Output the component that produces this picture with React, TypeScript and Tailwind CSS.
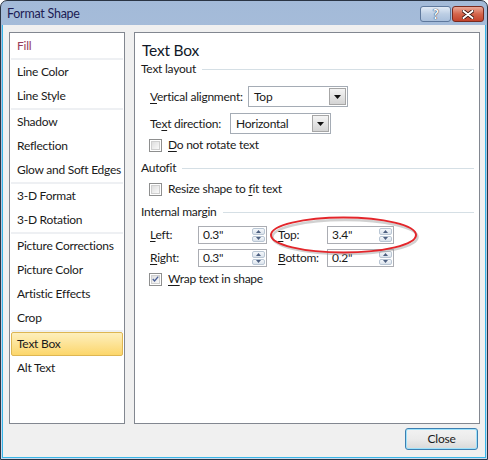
import type { ReactNode } from "react";

const NAV_GROUPS: string[][] = [
  ["Fill"],
  ["Line Color", "Line Style"],
  ["Shadow", "Reflection", "Glow and Soft Edges"],
  ["3-D Format", "3-D Rotation"],
  ["Picture Corrections", "Picture Color", "Artistic Effects", "Crop"],
  ["Text Box", "Alt Text"],
];

const SELECTED = "Text Box";

function Key({ children }: { children: ReactNode }) {
  return <span className="underline decoration-1 underline-offset-[2px]">{children}</span>;
}

function GroupHeader({ title }: { title: string }) {
  return (
    <div className="flex h-[16px] items-center gap-[6px] pr-[5px]">
      <span className="leading-[16px]">{title}</span>
      <span className="h-px flex-1 bg-[#d5dfe5]" />
    </div>
  );
}

function Dropdown({ value, width }: { value: string; width: string }) {
  return (
    <div className={`flex h-[21px] ${width} items-stretch border border-[#a5acb5] bg-white`}>
      <span className="flex-1 pl-[5px] leading-[19px]">{value}</span>
      <span className="m-px flex w-[17px] items-center justify-center border border-[#a6a6a6] bg-gradient-to-b from-[#f4f4f4] to-[#d4d4d4]">
        <svg width="7" height="4" viewBox="0 0 7 4">
          <path d="M0 0h7L3.5 4z" fill="#111" />
        </svg>
      </span>
    </div>
  );
}

function SpinButton({ up }: { up?: boolean }) {
  return (
    <span className="flex flex-1 items-center justify-center rounded-[2px] border border-[#b9c6d4] bg-gradient-to-b from-[#f5f8fb] to-[#dbe3ec]">
      <svg width="5" height="3" viewBox="0 0 5 3">
        <path d={up ? "M0 3h5L2.5 0z" : "M0 0h5L2.5 3z"} fill="#4c5f80" />
      </svg>
    </span>
  );
}

function Spinner({ value, width }: { value: string; width: string }) {
  return (
    <div className={`flex h-[18px] ${width} border border-[#abadb3] bg-white`}>
      <span className="flex-1 pl-[4px] leading-[16px]">{value}</span>
      <span className="flex w-[15px] flex-col gap-px p-px">
        <SpinButton up />
        <SpinButton />
      </span>
    </div>
  );
}

function Checkbox({ checked = false }: { checked?: boolean }) {
  return (
    <span className="flex h-[13px] w-[13px] shrink-0 border border-[#8e8f8f] bg-white p-px">
      <span className="flex h-full w-full items-center justify-center border border-[#cfcfcf] bg-gradient-to-br from-[#dedede] to-[#fafafa]">
        {checked && (
          <svg width="9" height="8" viewBox="0 0 9 8">
            <path d="M1 4l2.3 2.5L8 1" fill="none" stroke="#4a5f97" strokeWidth="1.7" />
          </svg>
        )}
      </span>
    </span>
  );
}

function CheckRow({ checked, children, className }: { checked?: boolean; children: ReactNode; className: string }) {
  return (
    <div className={`flex h-[16px] items-center gap-[6px] pl-[8px] ${className}`}>
      <Checkbox checked={checked} />
      <span className="leading-[16px]">{children}</span>
    </div>
  );
}

function NavList() {
  return (
    <div className="flex h-[392px] w-[116px] flex-col border border-[#828790] bg-white pt-px">
      {NAV_GROUPS.map((group, gi) => (
        <div key={gi} className="flex flex-col">
          {gi > 0 && <div className="mx-px h-[2px] bg-[#eef0f3]" />}
          {group.map((item) =>
            item === SELECTED ? (
              <div
                key={item}
                className="mx-px flex h-[24px] items-center whitespace-nowrap rounded-[2px] border border-[#deb652] bg-gradient-to-b from-[#fdefbd] via-[#fde395] to-[#fcd66a] pl-[5px]"
              >
                {item}
              </div>
            ) : (
              <div
                key={item}
                className={`flex h-[24px] items-center whitespace-nowrap pl-[7px] ${item === "Fill" ? "text-[#963c5a]" : "text-[#1a1a1a]"}`}
              >
                {item}
              </div>
            ),
          )}
        </div>
      ))}
    </div>
  );
}

function TextBoxPane() {
  return (
    <div className="relative flex h-[392px] w-[346px] flex-col border border-[#828790] bg-white pl-[6px]">
      <div className="ml-px mt-[7px] h-[21px] text-[15.5px] leading-[21px] tracking-[-0.2px] text-[#101828]">Text Box</div>
      <GroupHeader title="Text layout" />

      <div className="mt-[9px] flex h-[21px] items-center pl-[9px]">
        <span className="w-[98px] whitespace-nowrap">
          <Key>V</Key>ertical alignment:
        </span>
        <Dropdown value="Top" width="w-[100px]" />
      </div>
      <div className="mt-[6px] flex h-[21px] items-center pl-[9px]">
        <span className="w-[80px] whitespace-nowrap">
          Te<Key>x</Key>t direction:
        </span>
        <Dropdown value="Horizontal" width="w-[101px]" />
      </div>
      <CheckRow className="mt-[3px]">
        <Key>D</Key>o not rotate text
      </CheckRow>

      <div className="mt-[7px]">
        <GroupHeader title="Autofit" />
      </div>
      <CheckRow className="mt-[5px]">
        Resize shape to <Key>f</Key>it text
      </CheckRow>

      <div className="mt-[7px]">
        <GroupHeader title="Internal margin" />
      </div>
      <div className="mt-[6px] flex h-[18px] items-center pl-[9px]">
        <span className="w-[48px]">
          <Key>L</Key>eft:
        </span>
        <Spinner value={'0.3"'} width="w-[69px]" />
        <span className="ml-[11px] w-[49px]">
          <Key>T</Key>op:
        </span>
        <Spinner value={'3.4"'} width="w-[67px]" />
      </div>
      <div className="mt-[5px] flex h-[18px] items-center pl-[9px]">
        <span className="w-[48px]">
          <Key>R</Key>ight:
        </span>
        <Spinner value={'0.3"'} width="w-[69px]" />
        <span className="ml-[11px] w-[49px]">
          <Key>B</Key>ottom:
        </span>
        <Spinner value={'0.2"'} width="w-[67px]" />
      </div>
      <CheckRow checked className="mt-[4px]">
        <Key>W</Key>rap text in shape
      </CheckRow>

      {/* red annotation ring drawn over the "Top" field */}
      <svg className="pointer-events-none absolute left-[132px] top-[181px]" width="154" height="44" viewBox="0 0 154 44">
        <ellipse cx="78" cy="23" rx="72.5" ry="17" fill="none" stroke="#9a9a9a" strokeOpacity="0.45" strokeWidth="2.5" />
        <ellipse cx="76.5" cy="21" rx="72.5" ry="17.5" fill="none" stroke="#e3262b" strokeWidth="2" />
      </svg>
    </div>
  );
}

export default function App() {
  return (
    <div className="h-[460px] w-[488px] bg-white font-['Lato','Noto_Sans',sans-serif] text-[12px] tracking-[-0.25px] text-[#1a1a1a]">
      <div className="flex h-full w-full flex-col overflow-hidden rounded-t-[7px] border border-[#2a3443] bg-gradient-to-b from-[#a3bad8] to-[#c8d9ee]">
        <div className="flex h-[24px] shrink-0 items-start">
          <span className="ml-[6px] flex-1 text-[12.5px] leading-[26px] text-[#1c1c55]">Format Shape</span>
          <span className="mt-[5px] flex h-[16px] w-[31px] items-center justify-center rounded-[3px] border border-[#5e789c] bg-gradient-to-b from-[#e2ebf6] via-[#bccee4] to-[#a9bfdb] text-[13px] font-bold leading-none text-white [text-shadow:0_0_1px_#22324a,0_0_1px_#22324a]">
            ?
          </span>
          <span className="ml-px mr-[3px] mt-[5px] flex h-[16px] w-[32px] items-center justify-center rounded-[3px] border border-[#7a2a1e] bg-gradient-to-b from-[#e9a898] via-[#d4654c] to-[#c2422b]">
            <svg width="12" height="9" viewBox="0 0 12 9">
              <path d="M1.5 1l9 7M10.5 1l-9 7" stroke="#3b1510" strokeWidth="3.6" strokeLinecap="round" />
              <path d="M1.5 1l9 7M10.5 1l-9 7" stroke="#fff" strokeWidth="2" strokeLinecap="round" />
            </svg>
          </span>
        </div>
        <div className="flex flex-1 flex-col px-px pb-px">
          <div className="flex flex-1 flex-col border-x border-b border-[#37b6e8] bg-[#f0f0f0] pl-[6px] pr-[5px] pt-[7px]">
            <div className="flex gap-[9px]">
              <NavList />
              <TextBoxPane />
            </div>
            <div className="mt-[4px] flex justify-end pr-[2px]">
              <button
                type="button"
                className="h-[22px] w-[73px] rounded-[3px] border border-[#3c7fb1] bg-gradient-to-b from-[#f2f2f2] via-[#ebebeb] to-[#d9d9d9] text-[12px] text-[#1a1a1a] shadow-[inset_0_0_0_1px_#9fe2fb]"
              >
                Close
              </button>
            </div>
          </div>
        </div>
      </div>
    </div>
  );
}
